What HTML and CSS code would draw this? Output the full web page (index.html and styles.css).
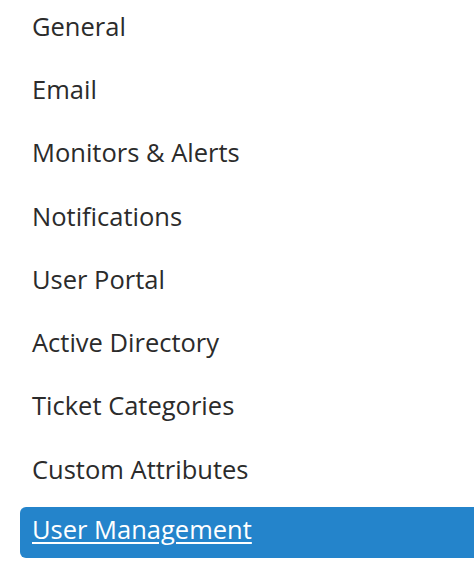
FILE: index.html
```html
<!DOCTYPE html>
<html>
<head>
<meta charset="utf-8">
<link rel="stylesheet" href="styles.css">
</head>
<body>
<ul class="menu">
  <li class="item"><a href="#">General</a></li>
  <li class="item"><a href="#">Email</a></li>
  <li class="item"><a href="#">Monitors &amp; Alerts</a></li>
  <li class="item"><a href="#">Notifications</a></li>
  <li class="item"><a href="#">User Portal</a></li>
  <li class="item"><a href="#">Active Directory</a></li>
  <li class="item"><a href="#">Ticket Categories</a></li>
  <li class="item"><a href="#">Custom Attributes</a></li>
  <li class="item active"><a href="#">User Management</a></li>
</ul>
</body>
</html>
```
FILE: styles.css
```css
html, body {
  margin: 0;
  padding: 0;
  background: #ffffff;
}
body {
  font-family: "Open Sans", "DejaVu Sans", sans-serif;
  overflow: hidden;
}
.menu {
  list-style: none;
  margin: 0.5px 0 0 20px;
  padding: 0;
  display: flex;
  flex-direction: column;
  gap: 12.3px;
}
.item {
  box-sizing: border-box;
  height: 51px;
  display: flex;
  align-items: center;
  padding-left: 12px;
  border-radius: 6px 0 0 6px;
}
.item a {
  font-size: 25.5px;
  line-height: 1.362;
  color: #2b2b2b;
  text-decoration: none;
}
.item.active {
  background: #2484cb;
  padding-bottom: 7px;
}
.item.active a {
  color: #ffffff;
  text-decoration: underline;
  text-underline-offset: 3px;
  text-decoration-thickness: 2px;
}
```
